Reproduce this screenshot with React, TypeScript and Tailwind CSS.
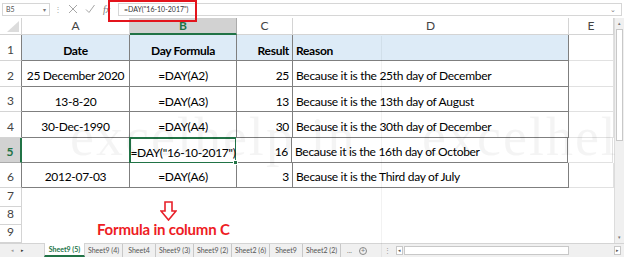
import React from 'react';

const FONT = { fontFamily: 'Lato, "Open Sans", sans-serif' };

const cols = ['A', 'B', 'C', 'D', 'E'];

const rows = [
  { n: 1, h: 'h-[28px]', a: 'Date', b: 'Day Formula', c: 'Result', d: 'Reason', head: true },
  { n: 2, h: 'h-[28px]', a: '25 December 2020', b: '=DAY(A2)', c: '25', d: 'Because it is the 25th day of December' },
  { n: 3, h: 'h-[27px]', a: '13-8-20', b: '=DAY(A3)', c: '13', d: 'Because it is the 13th day of August' },
  { n: 4, h: 'h-[27px]', a: '30-Dec-1990', b: '=DAY(A4)', c: '30', d: 'Because it is the 30th day of December' },
  { n: 5, h: 'h-[27px]', a: '', b: '=DAY("16-10-2017")', c: '16', d: 'Because it is the 16th day of October', sel: true },
  { n: 6, h: 'h-[27px]', a: '2012-07-03', b: '=DAY(A6)', c: '3', d: 'Because it is the Third day of July' },
];

const tabs = ['Sheet9 (4)', 'Sheet4', 'Sheet9 (3)', 'Sheet9 (2)', 'Sheet2 (6)', 'Sheet9', 'Sheet2 (2)'];

function FormulaBar() {
  return (
    <div className="h-[18px] flex items-center bg-white px-[2px] gap-[4px]">
      <div className="w-[48px] h-[13px] border border-[#d6d6d6] flex items-center justify-between px-[3px] text-[7px] text-[#555]">
        <span>B5</span>
        <span className="text-[6px] text-[#777]">▾</span>
      </div>
      <span className="text-[8px] text-[#aaa] w-[6px] text-center">⋮</span>
      <div className="w-[50px] h-[13px] flex items-center justify-around text-[#a6a6a6]">
        <svg width="10" height="10" viewBox="0 0 10 10">
          <path d="M1 1 L9 9 M9 1 L1 9" stroke="#a6a6a6" strokeWidth="1" />
        </svg>
        <svg width="10" height="10" viewBox="0 0 10 10">
          <path d="M1 5.5 L4 8.5 L9.5 1" stroke="#a6a6a6" strokeWidth="1" fill="none" />
        </svg>
        <span className="text-[10px] italic text-[#777]" style={{ fontFamily: '"Liberation Serif", serif' }}>fx</span>
      </div>
      <div className="flex-1 h-[13px] border border-[#d6d6d6] flex items-center justify-between px-[5px] text-[7px] text-[#333]">
        <span>=DAY("16-10-2017")</span>
        <span className="text-[7px] text-[#777]">⌄</span>
      </div>
    </div>
  );
}

function ColHeaders() {
  return (
    <div className="flex h-[17px]">
      <div className="w-[22px] border-r border-b border-[#d4d4d4] bg-white flex items-end justify-end p-[2px]">
        <svg width="12" height="11" viewBox="0 0 12 11">
          <path d="M12 0 L12 11 L0 11 Z" fill="#dcdcdc" />
        </svg>
      </div>
      {cols.map((c) => {
        const w = c === 'A' ? 'w-[108px]' : c === 'B' ? 'w-[107px]' : c === 'C' ? 'w-[56px]' : c === 'D' ? 'w-[276px]' : 'w-[45px]';
        const isB = c === 'B';
        return (
          <div
            key={c}
            className={`${w} flex items-center justify-center text-[12px] border-r ${
              isB
                ? 'bg-[#d2d2d2] text-[#217346] font-bold border-b-2 border-b-[#217346] border-r-[#ababab]'
                : 'bg-white text-[#444] border-b border-[#d4d4d4]'
            }`}
          >
            {c}
          </div>
        );
      })}
    </div>
  );
}

function DataRow({ r }: { r: (typeof rows)[number] }) {
  const cell = `border-r border-b border-[#7f7f7f] flex px-[3px] whitespace-nowrap overflow-visible ${
    r.head ? 'items-end pb-0' : 'items-center pt-[5px]'
  }`;
  const bg = r.head ? 'bg-[#ddebf7] font-bold' : 'bg-white';
  return (
    <div className={`flex ${r.h} text-[12px] tracking-[-0.3px] text-black`}>
      <div
        className={`w-[22px] flex items-end justify-center pb-[1px] text-[12px] tracking-normal border-b ${
          r.sel
            ? 'bg-[#d2d2d2] text-[#217346] font-bold border-r-2 border-r-[#217346] border-b-[#ababab]'
            : 'bg-white text-[#444] border-r border-[#d4d4d4] border-r-[#7f7f7f]'
        }`}
      >
        {r.n}
      </div>
      <div className={`w-[108px] justify-center ${cell} ${bg}`}>{r.a}</div>
      <div
        className={`w-[107px] justify-center ${cell} ${bg} ${
          r.sel ? 'relative border-2 border-[#217346] -ml-[1px] -mt-[1px] px-[1px]' : ''
        }`}
      >
        {r.b}
        {r.sel && <div className="absolute -right-[3px] -bottom-[3px] w-[5px] h-[5px] bg-[#217346] border border-white" />}
      </div>
      <div className={`w-[56px] justify-end ${cell} ${bg}`}>{r.c}</div>
      <div className={`w-[276px] justify-start ${cell} ${bg}`}>{r.d}</div>
      <div className="w-[45px] border-r border-b border-[#e1e1e1] bg-white" />
    </div>
  );
}

function EmptyRow({ n, h }: { n: number; h: string }) {
  return (
    <div className={`flex ${h}`}>
      <div className="w-[22px] flex items-end justify-center pb-[1px] text-[12px] text-[#444] bg-white border-r border-b border-[#d4d4d4]">
        {n}
      </div>
      <div className="flex-1 bg-white" />
    </div>
  );
}

function DownArrow() {
  return (
    <svg width="17" height="20" viewBox="0 0 17 20">
      <path
        d="M5 1 L12 1 L12 10 L16 10 L8.5 19 L1 10 L5 10 Z"
        fill="white"
        stroke="#e8202a"
        strokeWidth="1.6"
        strokeLinejoin="miter"
      />
    </svg>
  );
}

function VScroll() {
  return (
    <div className="w-[10px] bg-[#f0f0f0] border-l border-[#dcdcdc] flex flex-col items-center pt-[2px] pb-[2px]">
      <span className="text-[5px] text-[#777] leading-[7px]">▴</span>
      <div className="w-[7px] h-[112px] bg-white border border-[#c8c8c8] mt-[2px]" />
      <div className="flex-1" />
      <span className="text-[5px] text-[#777] leading-[7px]">▾</span>
    </div>
  );
}

function TabBar() {
  return (
    <div className="h-[14px] flex items-stretch bg-[#f0f0f0] border-t border-[#d4d4d4] text-[7px] text-[#555]">
      <div className="w-[44px] flex items-center gap-[7px] pl-[11px] text-[5px] text-[#999]">
        <span>◂</span>
        <span className="text-[#333]">▸</span>
      </div>
      <div className="w-[41px] bg-white text-[#217346] font-bold flex items-center justify-center border-b-2 border-[#217346] -mt-[1px] border-x border-x-[#d4d4d4]">
        Sheet9 (5)
      </div>
      {tabs.map((t) => (
        <div key={t} className={`${t.length > 6 ? 'w-[38px]' : 'w-[33px]'} flex items-center justify-center border-r border-[#c8c8c8]`}>
          {t}
        </div>
      ))}
      <div className="flex items-center gap-[7px] pl-[6px] text-[#777]">
        <span>...</span>
        <span className="w-[8px] h-[8px] rounded-full border border-[#888] flex items-center justify-center text-[7px] leading-none">+</span>
        <span className="ml-[10px] text-[#999]">⋮</span>
      </div>
      <div className="flex-1 ml-[5px] flex items-center gap-[1px] pr-[3px]">
        <div className="w-[7px] h-[9px] border border-[#c8c8c8] bg-white text-[5px] flex items-center justify-center">◂</div>
        <div className="w-[165px] h-[9px] border border-[#c8c8c8] bg-white" />
        <div className="flex-1" />
        <div className="w-[7px] h-[9px] border border-[#c8c8c8] bg-white text-[5px] flex items-center justify-center">▸</div>
      </div>
    </div>
  );
}

export default function App() {
  return (
    <div className="w-[624px] h-[257px] overflow-hidden relative bg-white flex flex-col" style={FONT}>
      <FormulaBar />
      <div className="flex flex-1 min-h-0">
        <div className="w-[614px] flex flex-col overflow-hidden">
          <ColHeaders />
          {rows.map((r) => (
            <DataRow key={r.n} r={r} />
          ))}
          <EmptyRow n={7} h="h-[19px]" />
          <EmptyRow n={8} h="h-[18px]" />
          <EmptyRow n={9} h="h-[18px]" />
        </div>
        <VScroll />
      </div>
      <TabBar />

      {/* watermark */}
      <div
        className="absolute left-[70px] top-[110px] text-[54px] leading-none text-black/[0.045] pointer-events-none tracking-[2px]"
        style={{ fontFamily: '"Liberation Serif", serif' }}
      >
        excelhelp.in
      </div>
      <div
        className="absolute left-[422px] top-[110px] text-[54px] leading-none text-black/[0.045] pointer-events-none tracking-[2px]"
        style={{ fontFamily: '"Liberation Serif", serif' }}
      >
        excelhel
      </div>
      <div className="absolute left-[381px] top-[36px] w-px h-[221px] bg-black/[0.05]" />

      {/* annotation */}
      <div className="absolute left-[160px] top-[201px]">
        <DownArrow />
      </div>
      <div className="absolute left-[97px] top-[218px] text-[15px] font-bold tracking-[-0.2px] text-[#ee1c24]">Formula in column C</div>
      <div className="absolute left-[108px] top-0 w-[89px] h-[22px] border-2 border-[#e3141c]" />
    </div>
  );
}
